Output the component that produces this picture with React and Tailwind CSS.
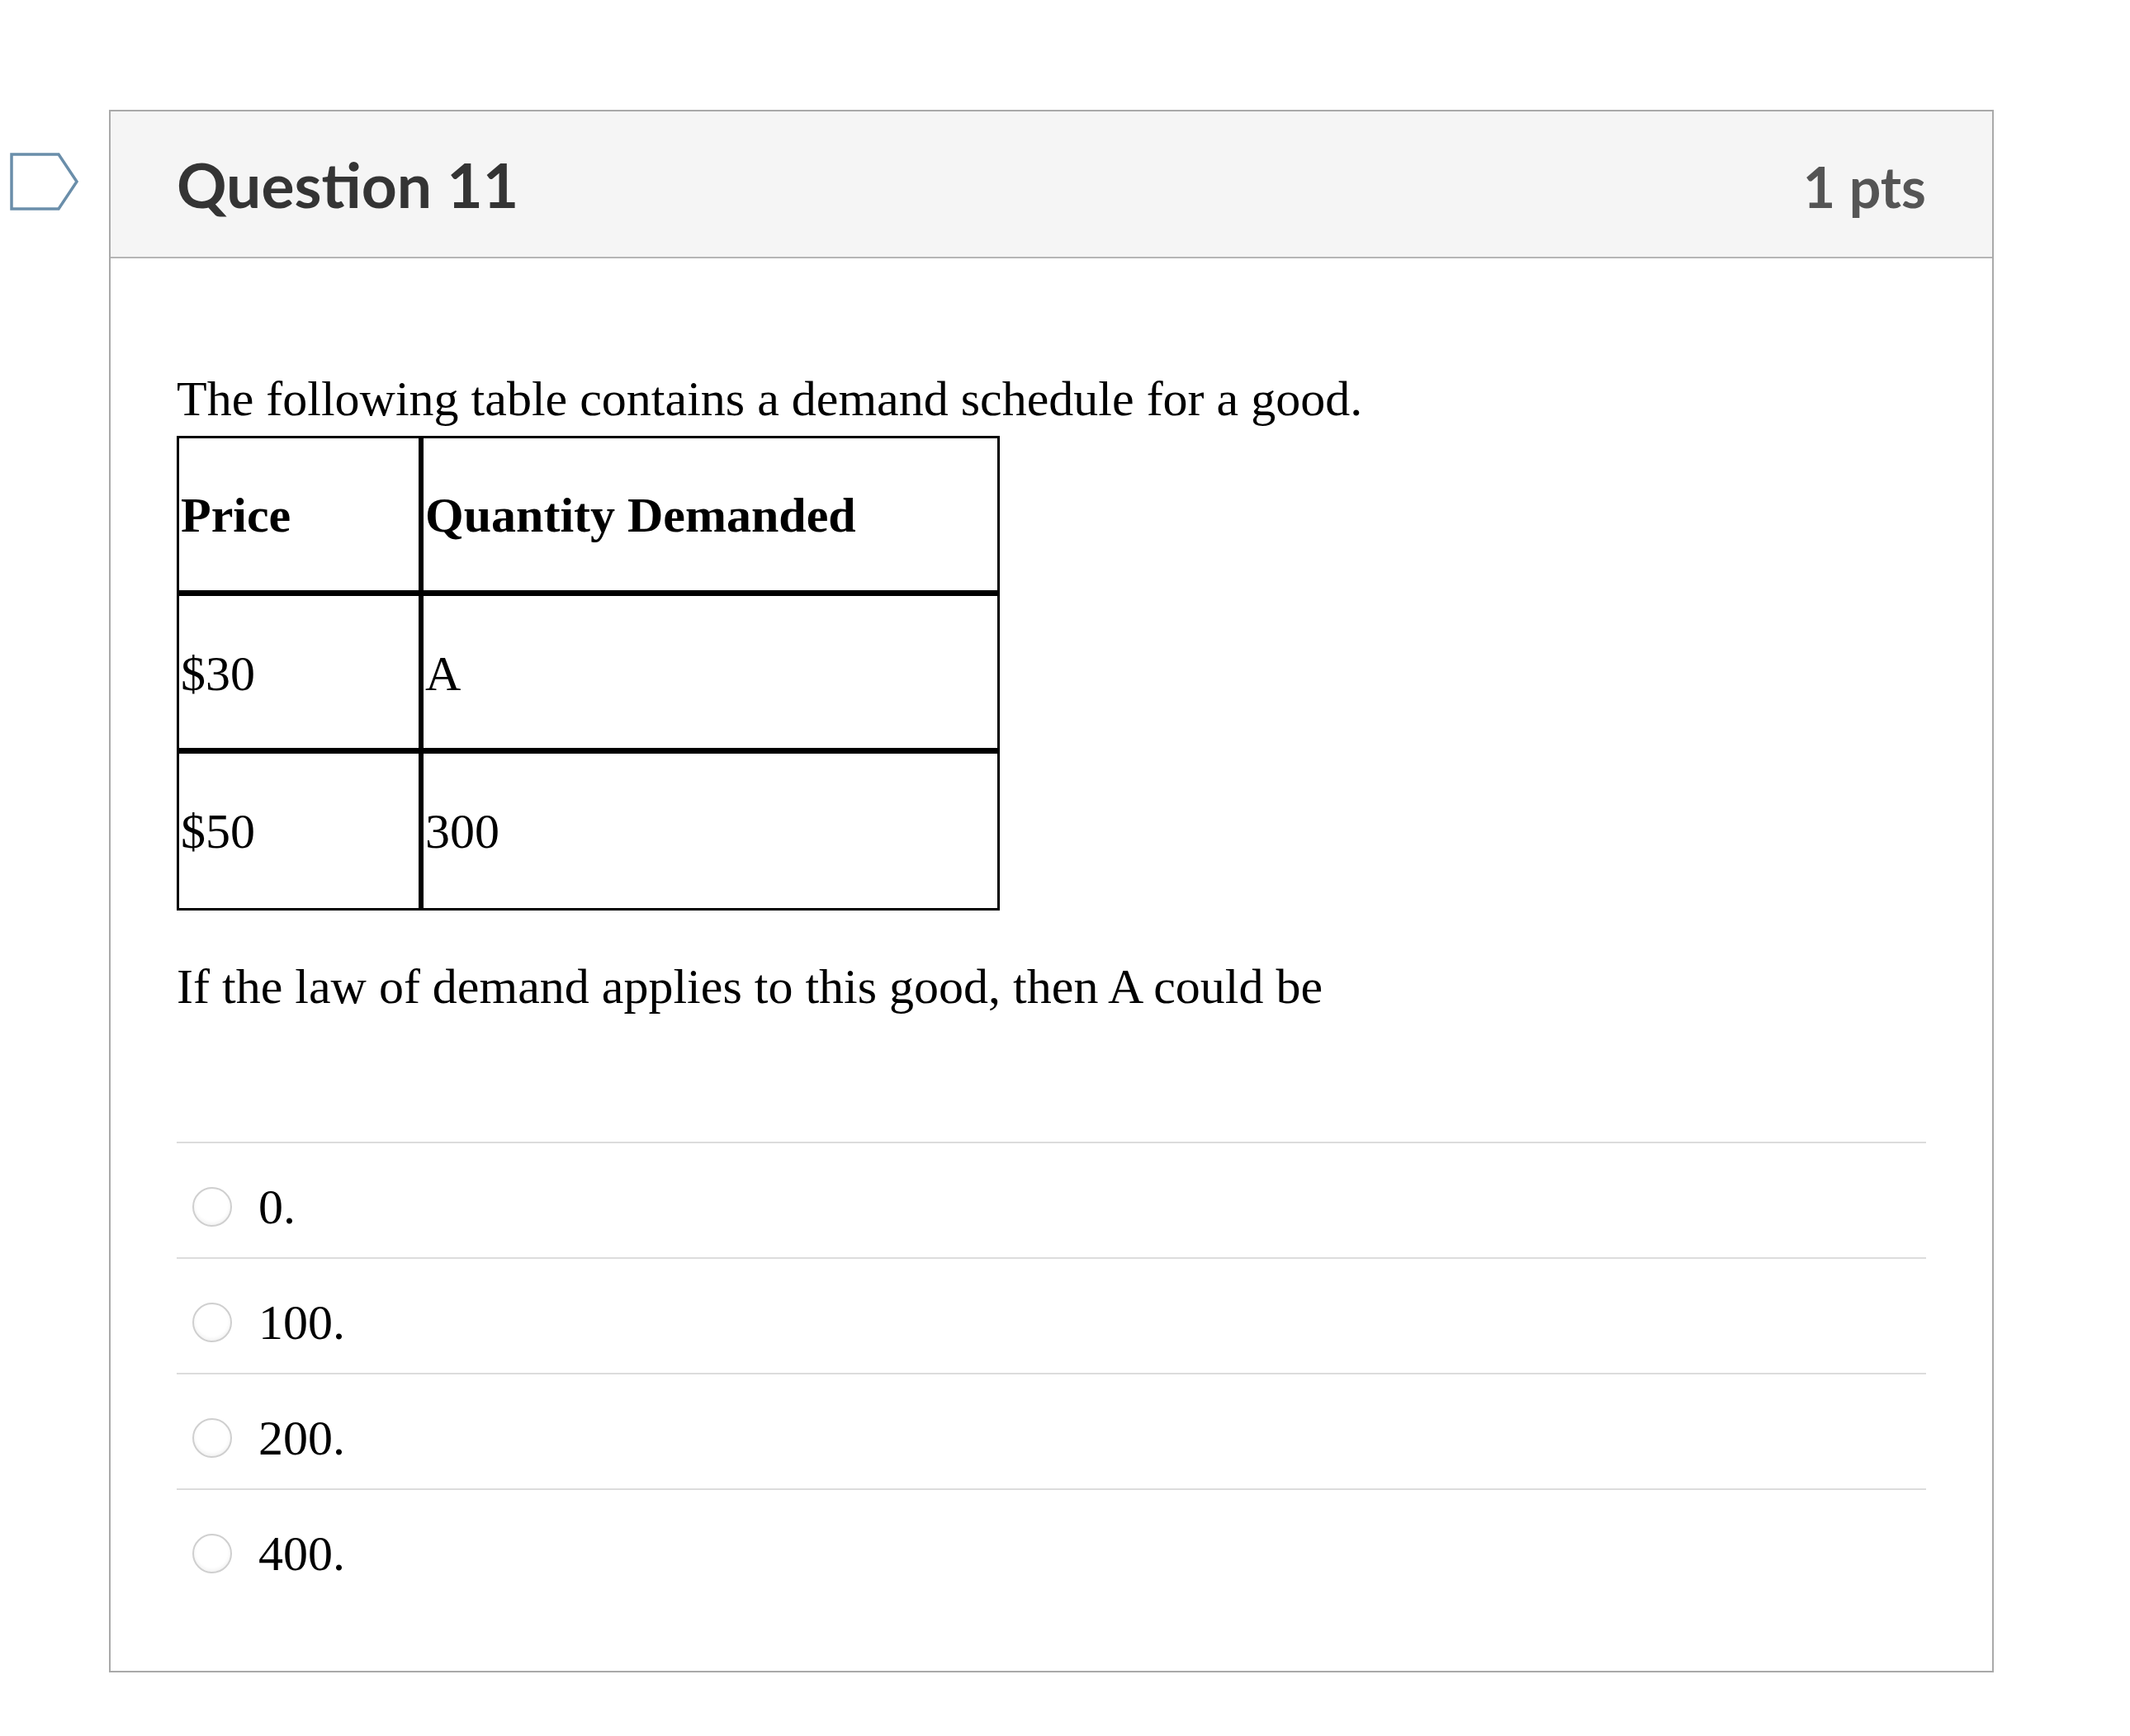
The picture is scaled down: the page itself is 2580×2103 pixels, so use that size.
export default function App() {
  const answers = ["0.", "100.", "200.", "400."];
  return (
    <div className="relative w-[2580px] h-[2103px] bg-white pt-[133px] pl-[132px]">
      <svg
        className="absolute left-[11px] top-[184px]"
        width="86"
        height="72"
        viewBox="0 0 86 72"
      >
        <path
          d="M3 3 H60 L82 36 L60 69 H3 Z"
          fill="none"
          stroke="#6a8eaa"
          strokeWidth="3.5"
          strokeLinejoin="miter"
        />
      </svg>

      <div className="w-[2283px] border-2 border-[#a9a9a9] bg-white">
        <div className="h-[178px] bg-[#f5f5f5] border-b-2 border-[#b5b5b5] flex items-center px-[80px]">
          <div className="flex w-full items-baseline justify-between">
            <h2
              className="text-[75px] font-bold text-[#343434] leading-[1.2]"
              style={{ fontFamily: "Lato, 'Noto Sans', sans-serif" }}
            >
              Question 11
            </h2>
            <div
              className="text-[68px] font-bold text-[#555555] leading-[1.2] pt-[6px]"
              style={{ fontFamily: "Lato, 'Noto Sans', sans-serif" }}
            >
              1 pts
            </div>
          </div>
        </div>

        <div
          className="px-[80px] pt-[125px] pb-[81px] text-black"
          style={{ fontFamily: "'Liberation Serif', 'Times New Roman', serif" }}
        >
          <p className="text-[60px] leading-[90px]">
            The following table contains a demand schedule for a good.
          </p>

          <div className="w-[997px] border-[3px] border-black text-[60px] leading-none">
            <div className="flex h-[191px] border-b-[7px] border-black">
              <div className="w-[296px] flex items-center pl-[2px] pt-[2px] font-bold border-r-[6px] border-black">
                Price
              </div>
              <div className="flex-1 flex items-center pl-[2px] pt-[2px] font-bold">
                Quantity Demanded
              </div>
            </div>
            <div className="flex h-[191px] border-b-[7px] border-black">
              <div className="w-[296px] flex items-center pl-[2px] pt-[4px] border-r-[6px] border-black">
                $30
              </div>
              <div className="flex-1 flex items-center pl-[2px] pt-[4px]">A</div>
            </div>
            <div className="flex h-[187px]">
              <div className="w-[296px] flex items-center pl-[2px] border-r-[6px] border-black">
                $50
              </div>
              <div className="flex-1 flex items-center pl-[2px]">300</div>
            </div>
          </div>

          <p className="text-[60px] leading-[90px] mt-[47px]">
            If the law of demand applies to this good, then A could be
          </p>

          <div className="mt-[143px]">
            {answers.map((a, i) => (
              <div
                key={i}
                className="h-[140px] border-t-2 border-[#dcdcdc] flex items-center pt-[16px]"
              >
                <span className="ml-[19px] w-[48px] h-[48px] rounded-full border-2 border-[#cfcfcf] bg-white shadow-[inset_0_-2px_4px_rgba(0,0,0,0.06)] shrink-0"></span>
                <span className="ml-[32px] text-[60px] leading-none">{a}</span>
              </div>
            ))}
          </div>
        </div>
      </div>
    </div>
  );
}
